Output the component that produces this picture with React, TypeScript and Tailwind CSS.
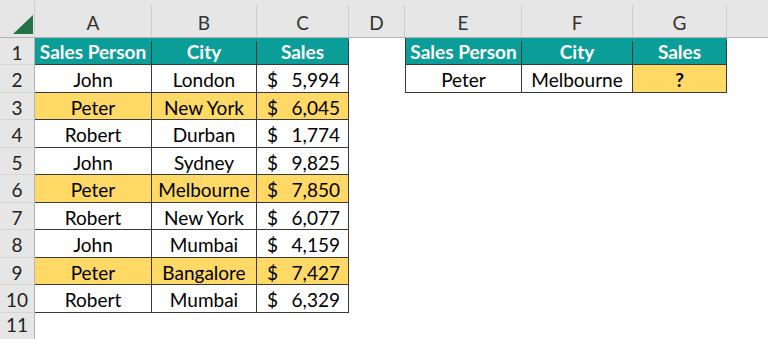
import React from "react";

const cols = [
  { key: "A", w: 117 },
  { key: "B", w: 105 },
  { key: "C", w: 92 },
  { key: "D", w: 56 },
  { key: "E", w: 117 },
  { key: "F", w: 111 },
  { key: "G", w: 94 },
];

const rowH = [27, 28, 27, 28, 27, 28, 27, 28, 27, 28];

type Row = { p: string; c: string; s: string; hl?: boolean };
const data: Row[] = [
  { p: "John", c: "London", s: "5,994" },
  { p: "Peter", c: "New York", s: "6,045", hl: true },
  { p: "Robert", c: "Durban", s: "1,774" },
  { p: "John", c: "Sydney", s: "9,825" },
  { p: "Peter", c: "Melbourne", s: "7,850", hl: true },
  { p: "Robert", c: "New York", s: "6,077" },
  { p: "John", c: "Mumbai", s: "4,159" },
  { p: "Peter", c: "Bangalore", s: "7,427", hl: true },
  { p: "Robert", c: "Mumbai", s: "6,329" },
];

const font = { fontFamily: "Lato, 'Liberation Sans', sans-serif" };

function RowHead({ n, h }: { n: number; h: number }) {
  return (
    <div
      className="flex shrink-0 items-center justify-center border-r border-b border-r-[#b4b4b4] border-b-[#d6d6d6] bg-[#e6e6e6] pt-[4px] text-[19px] text-[#222]"
      style={{ height: h }}
    >
      <div className="w-[35px] text-center">{n}</div>
    </div>
  );
}

export default function App() {
  return (
    <div className="h-[339px] w-[768px] overflow-hidden bg-white" style={font}>
      {/* Column header */}
      <div className="flex h-[38px] border-b border-[#b4b4b4] bg-[#e6e6e6]">
        <div className="relative w-[35px] shrink-0 border-r border-[#d0d0d0]">
          <svg className="absolute left-0 top-0" width="35" height="37">
            <polygon points="13,34 33,34 33,15" fill="#217346" />
          </svg>
        </div>
        {cols.map((c) => (
          <div
            key={c.key}
            className="flex shrink-0 flex-col"
            style={{ width: c.w }}
          >
            <div className="h-[12px]" />
            <div className="flex flex-1 items-center justify-center border-r border-[#cfcfcf] pt-[4px] text-[19px] text-[#333]">
              {c.key}
            </div>
          </div>
        ))}
        <div className="flex-1" />
      </div>

      {/* Body */}
      <div className="flex">
        <div className="flex w-[35px] shrink-0 flex-col">
          {rowH.map((h, i) => (
            <RowHead key={i} n={i + 1} h={h} />
          ))}
          <div className="flex h-[26px] items-start justify-center border-r border-[#b4b4b4] bg-[#e6e6e6] text-[19px] leading-[24px] text-[#222]">
            11
          </div>
        </div>

        {/* Left table A-C */}
        <div className="flex w-[314px] shrink-0 flex-col text-[19px] text-black">
          <div
            className="flex border-b border-[#3a3a3a] bg-[#0b9e99] pt-[3px] font-bold text-white"
            style={{ height: rowH[0] }}
          >
            <div className="flex w-[117px] items-center justify-center border-r border-[#3a3a3a]">
              Sales Person
            </div>
            <div className="flex w-[105px] items-center justify-center border-r border-[#3a3a3a]">
              City
            </div>
            <div className="flex w-[92px] items-center justify-center border-r border-[#3a3a3a]">
              Sales
            </div>
          </div>
          {data.map((r, i) => (
            <div
              key={i}
              className={`flex border-b border-[#3a3a3a] ${r.hl ? "bg-[#ffd966]" : "bg-white"}`}
              style={{ height: rowH[i + 1] }}
            >
              <div className="flex w-[117px] items-center justify-center border-r border-[#3a3a3a] pt-[4px]">
                {r.p}
              </div>
              <div className="flex w-[105px] items-center justify-center border-r border-[#3a3a3a] pt-[4px]">
                {r.c}
              </div>
              <div className="flex w-[92px] items-center justify-between border-r border-[#3a3a3a] pl-[10px] pr-[8px] pt-[4px]">
                <span>$</span>
                <span>{r.s}</span>
              </div>
            </div>
          ))}
        </div>

        {/* D column spacer */}
        <div className="w-[56px] shrink-0" />

        {/* Right table E-G */}
        <div className="flex w-[322px] shrink-0 flex-col self-start text-[19px] text-black">
          <div
            className="flex border-b border-l border-[#3a3a3a] bg-[#0b9e99] pt-[3px] font-bold text-white"
            style={{ height: rowH[0] }}
          >
            <div className="flex w-[116px] items-center justify-center border-r border-[#3a3a3a]">
              Sales Person
            </div>
            <div className="flex w-[111px] items-center justify-center border-r border-[#3a3a3a]">
              City
            </div>
            <div className="flex w-[94px] items-center justify-center border-r border-[#3a3a3a]">
              Sales
            </div>
          </div>
          <div
            className="flex border-b border-l border-[#3a3a3a]"
            style={{ height: rowH[1] }}
          >
            <div className="flex w-[116px] items-center justify-center border-r border-[#3a3a3a] bg-white pt-[4px]">
              Peter
            </div>
            <div className="flex w-[111px] items-center justify-center border-r border-[#3a3a3a] bg-white pt-[4px]">
              Melbourne
            </div>
            <div className="flex w-[94px] items-center justify-center border-r border-[#3a3a3a] bg-[#ffd966] pt-[4px] font-bold">
              ?
            </div>
          </div>
        </div>
      </div>
    </div>
  );
}
